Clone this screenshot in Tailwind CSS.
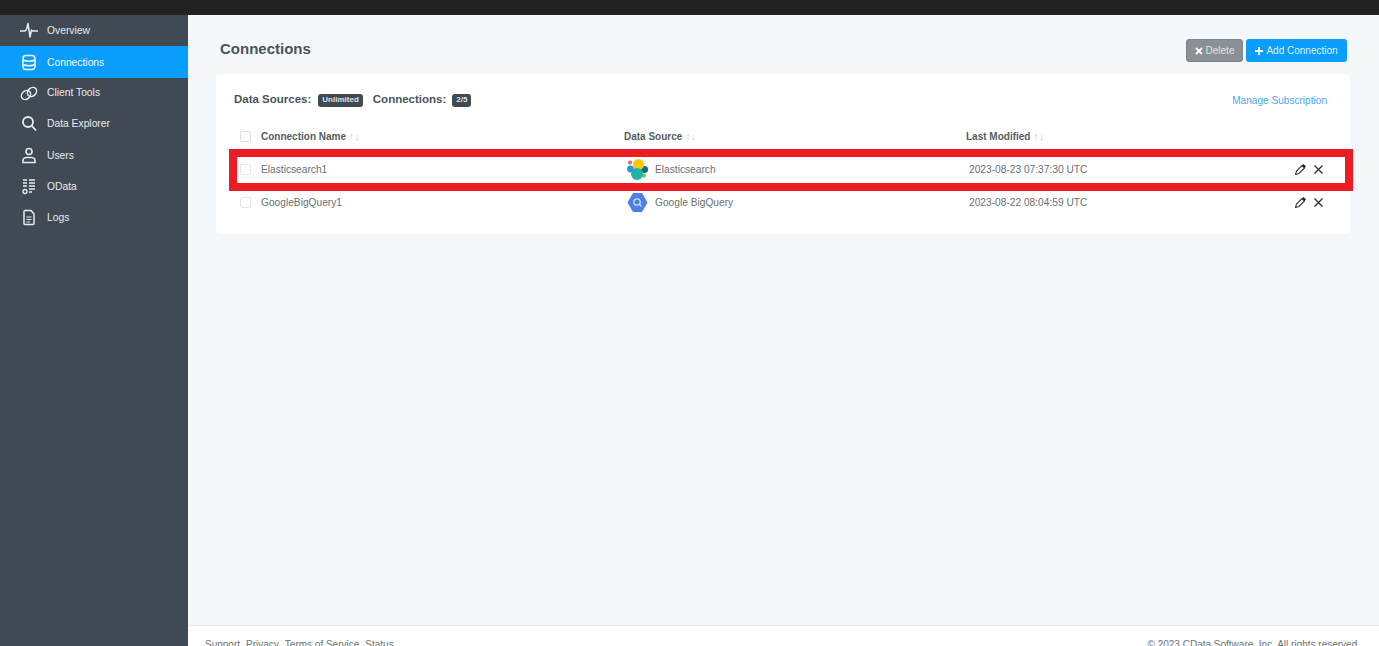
<!DOCTYPE html>
<html lang="en">
<head>
<meta charset="utf-8">
<title>Connections</title>
<script src="https://cdn.jsdelivr.net/npm/@tailwindcss/browser@4"></script>
</head>
<body class="h-[646px] w-[1379px] overflow-hidden bg-[#f4f8fb] font-['Liberation_Sans',Arial,sans-serif] text-[11px] text-[#6a7076]">
<div class="relative flex h-[646px] flex-col overflow-hidden">
  <header class="h-[15px] shrink-0 bg-[#222222]"></header>
  <div class="flex min-h-0 flex-1">
    <aside class="w-[188px] shrink-0 bg-[#3f4a55] text-[10.300px] text-[#e8ebee]">
      <nav class="flex flex-col">
        <a class="flex h-[31px] items-center gap-[9px] pl-[20px]">
          <svg class="h-[17px] w-[18px]" viewBox="0 0 18 17" fill="none" stroke="currentColor" stroke-width="1.500" stroke-linejoin="round"><path d="M0 9h5l1.500-1.500 1.500-6 2 13.500 1.500-7 1 1h5.500"/></svg>
          <span>Overview</span>
        </a>
        <a class="flex h-[32px] items-center gap-[9px] bg-[#0a9dfb] pl-[20px] text-[#f0f9ff]">
          <svg class="h-[17px] w-[18px]" viewBox="0 0 18 17" fill="none" stroke="currentColor" stroke-width="1.500"><rect x="3" y="1.500" width="12" height="14" rx="3"/><path d="M3 6c3 1.500 9 1.500 12 0M3 10.500c3 1.500 9 1.500 12 0"/></svg>
          <span class="mt-[1px]">Connections</span>
        </a>
        <a class="flex h-[30px] items-center gap-[9px] pl-[20px]">
          <svg class="h-[17px] w-[18px]" viewBox="0 0 18 17" fill="none" stroke="currentColor" stroke-width="1.500"><ellipse cx="6" cy="10" rx="5" ry="4" transform="rotate(-40 6 10)"/><ellipse cx="12" cy="7" rx="5" ry="4" transform="rotate(-40 12 7)"/></svg>
          <span>Client Tools</span>
        </a>
        <a class="flex h-[31px] items-center gap-[9px] pl-[20px]">
          <svg class="h-[17px] w-[18px]" viewBox="0 0 18 17" fill="none" stroke="currentColor" stroke-width="1.800"><circle cx="8" cy="7" r="5"/><path d="M11.500 10.500l4.500 5"/></svg>
          <span>Data Explorer</span>
        </a>
        <a class="flex h-[32px] items-center gap-[9px] pl-[20px]">
          <svg class="h-[17px] w-[18px]" viewBox="0 0 18 17" fill="none" stroke="currentColor" stroke-width="1.600"><circle cx="9" cy="4.500" r="3"/><path d="M3 15.500v-2c0-2 2-3 3.500-3h5c1.500 0 3.500 1 3.500 3v2z"/></svg>
          <span class="mt-[1px]">Users</span>
        </a>
        <a class="flex h-[31px] items-center gap-[9px] pl-[20px]">
          <svg class="h-[17px] w-[18px]" viewBox="0 0 18 17" fill="none" stroke="currentColor" stroke-width="1.300"><path d="M3 2h4M3 5h4M3 8h4M9 2h6M9 5h6M9 8h6M9 11h6M9 14h3"/><circle cx="5" cy="13.500" r="2"/></svg>
          <span>OData</span>
        </a>
        <a class="flex h-[31px] items-center gap-[9px] pl-[20px]">
          <svg class="h-[17px] w-[18px]" viewBox="0 0 18 17" fill="none" stroke="currentColor" stroke-width="1.500" stroke-linejoin="round"><path d="M5 1.500h6l3 3.500v9.500a1 1 0 0 1-1 1H5a1 1 0 0 1-1-1v-12a1 1 0 0 1 1-1z"/><path d="M6.500 8h5M6.500 10.500h5M6.500 13h3.500" stroke-width="1.100"/></svg>
          <span>Logs</span>
        </a>
      </nav>
    </aside>
    <div class="flex min-w-0 flex-1 flex-col">
      <main class="min-h-0 flex-1 pr-[29px] pl-[28px]">
        <div class="flex h-[59px] items-start justify-between pr-[3px]">
          <h1 class="mt-[24px] pl-[4px] text-[15px] leading-[20px] font-bold text-[#4b535b]">Connections</h1>
          <div class="mt-[24px] flex gap-[3px]">
            <button class="flex h-[23px] w-[57px] items-center justify-center gap-[3px] rounded-[3px] border border-[#7b8389] bg-[#8a9095] text-[10px] text-[#e0e3e5]">
              <svg class="h-[8px] w-[8px]" viewBox="0 0 8 8" stroke="white" stroke-width="1.800"><path d="M1 1l6 6M7 1l-6 6"/></svg>Delete
            </button>
            <button class="flex h-[23px] w-[101px] items-center justify-center gap-[3px] rounded-[3px] bg-[#0a9dfb] text-[10px] text-[#dff1ff]">
              <svg class="h-[8px] w-[8px]" viewBox="0 0 8 8" stroke="white" stroke-width="1.800"><path d="M4 0v8M0 4h8"/></svg>Add Connection
            </button>
          </div>
        </div>
        <section class="h-[160px] rounded-[4px] bg-white pt-[18px]">
          <div class="flex h-[16px] items-center justify-between pr-[23px] pl-[18px]">
            <div class="flex items-center">
              <span class="text-[11.500px] font-bold text-[#4b535b]">Data Sources:</span>
              <span class="ml-[7px] rounded-[3px] bg-[#3f4a55] px-[4px] py-[1.500px] text-[8px] leading-[10px] font-bold text-[#dfe3e6]">Unlimited</span>
              <span class="ml-[10px] text-[11.500px] font-bold text-[#4b535b]">Connections:</span>
              <span class="ml-[6px] rounded-[3px] bg-[#3f4a55] px-[4px] py-[1.500px] text-[8px] leading-[10px] font-bold text-[#dfe3e6]">2/5</span>
            </div>
            <a class="mt-[1px] text-[10.100px] text-[#4aa8f5]">Manage Subscription</a>
          </div>
          <div class="mt-[17px] grid h-[22px] grid-cols-[21px_363px_342px_1fr] items-center pl-[24px] text-[10px] font-bold text-[#565d64]">
            <span class="h-[11px] w-[11px] rounded-[2px] border border-[#dcdfe2] bg-white"></span>
            <span>Connection Name <span class="text-[11px] font-normal text-[#ccd1d5]">↑↓</span></span>
            <span>Data Source <span class="text-[11px] font-normal text-[#ccd1d5]">↑↓</span></span>
            <span>Last Modified <span class="text-[11px] font-normal text-[#ccd1d5]">↑↓</span></span>
          </div>
          <div class="mt-[6px] grid h-[33px] grid-cols-[21px_363px_342px_1fr] items-center pl-[24px] text-[10.200px]">
            <span class="h-[11px] w-[11px] rounded-[2px] border border-[#e4e6e8] bg-white"></span>
            <span>Elasticsearch1</span>
            <span class="flex items-center gap-[7px] pl-[3px]">
              <svg class="h-[21px] w-[21px]" viewBox="0 0 21 21"><circle cx="3" cy="3.500" r="2" fill="#ef5a8b"/><circle cx="17" cy="16.500" r="2.200" fill="#8dc640"/><circle cx="3.500" cy="10" r="3.400" fill="#1f9ed1"/><circle cx="17.500" cy="10.500" r="3.500" fill="#13678c"/><circle cx="11.500" cy="5.500" r="5.500" fill="#fdc90f"/><circle cx="10" cy="15" r="6" fill="#1fb5a6"/></svg>
              Elasticsearch
            </span>
            <span class="flex items-center justify-between pr-[27px] pl-[3px]">
              2023-08-23 07:37:30 UTC
              <span class="flex items-center gap-[8px]">
                <svg class="h-[11px] w-[11px]" viewBox="0 0 11 11"><path d="M0.500 10.500l1-3.500 5.500-5.500 2.500 2.500-5.500 5.500z" fill="none" stroke="#333" stroke-width="1.100"/><path d="M7 1.500l1.500-1.500 2.500 2.500-1.500 1.500z" fill="#222"/></svg>
                <svg class="h-[9px] w-[9px]" viewBox="0 0 9 9" stroke="#333" stroke-width="1.300"><path d="M0.500 0.500l8 8M8.500 0.500l-8 8"/></svg>
              </span>
            </span>
          </div>
          <div class="grid h-[33px] grid-cols-[21px_363px_342px_1fr] items-center pl-[24px] text-[10.200px]">
            <span class="h-[11px] w-[11px] rounded-[2px] border border-[#e4e6e8] bg-white"></span>
            <span>GoogleBigQuery1</span>
            <span class="flex items-center gap-[7px] pl-[3px]">
              <svg class="h-[21px] w-[21px]" viewBox="0 0 21 21"><path d="M6 1h9l5.500 9.500-5.500 9.500h-9l-5.500-9.500z" fill="#4a80e8"/><circle cx="10" cy="10" r="3.200" fill="none" stroke="#cfe0fb" stroke-width="1.300"/><path d="M12 12l2.500 2.500" stroke="#cfe0fb" stroke-width="1.300"/></svg>
              Google BigQuery
            </span>
            <span class="flex items-center justify-between pr-[27px] pl-[3px]">
              2023-08-22 08:04:59 UTC
              <span class="flex items-center gap-[8px]">
                <svg class="h-[11px] w-[11px]" viewBox="0 0 11 11"><path d="M0.500 10.500l1-3.500 5.500-5.500 2.500 2.500-5.500 5.500z" fill="none" stroke="#333" stroke-width="1.100"/><path d="M7 1.500l1.500-1.500 2.500 2.500-1.500 1.500z" fill="#222"/></svg>
                <svg class="h-[9px] w-[9px]" viewBox="0 0 9 9" stroke="#333" stroke-width="1.300"><path d="M0.500 0.500l8 8M8.500 0.500l-8 8"/></svg>
              </span>
            </span>
          </div>
        </section>
      </main>
      <footer class="flex h-[21px] shrink-0 items-start justify-between border-t border-[#e6e9ec] bg-white pt-[13px] pr-[19px] pl-[17px] text-[10px] leading-[12px] text-[#6b7278]">
        <div class="flex gap-[6px]"><span>Support</span><span>Privacy</span><span>Terms of Service</span><span>Status</span></div>
        <div>© 2023 CData Software, Inc. All rights reserved.</div>
      </footer>
    </div>
  </div>
  <div class="absolute top-[149px] left-[229px] h-[42px] w-[1124px] border-[8px] border-[#ed1c24]"></div>
</div>
</body>
</html>
